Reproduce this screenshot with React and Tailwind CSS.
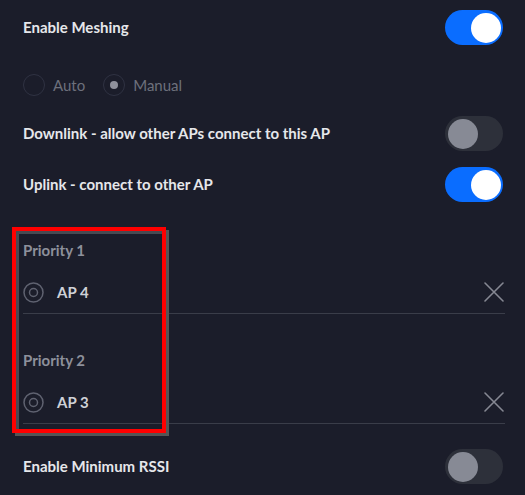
import { useState } from 'react';

function Toggle({ on, onChange }) {
  return (
    <button
      onClick={onChange}
      className={`relative w-[58px] h-[35px] rounded-full shrink-0 ${on ? 'bg-[#0a6dff]' : 'bg-[#2d303a]'}`}
    >
      <span
        className={`absolute top-[2.5px] w-[30px] h-[30px] rounded-full ${on ? 'left-[26px] bg-white' : 'left-[3px] bg-[#878a95]'}`}
      />
    </button>
  );
}

function Radio({ checked, label }) {
  return (
    <div className="flex items-center gap-[8px]">
      <span className="w-[22px] h-[22px] rounded-full border border-[#2f3242] flex items-center justify-center">
        {checked && <span className="w-[8px] h-[8px] rounded-full bg-[#8f919c]" />}
      </span>
      <span className="text-[15px] text-[#6d707c]">{label}</span>
    </div>
  );
}

function TargetIcon() {
  return (
    <svg width="21" height="21" viewBox="0 0 21 21" fill="none" stroke="#5f6270" strokeWidth="1.5">
      <circle cx="10.5" cy="10.5" r="9.5" />
      <circle cx="10.5" cy="10.5" r="4" />
    </svg>
  );
}

function CloseIcon() {
  return (
    <svg width="20" height="20" viewBox="0 0 20 20" fill="none" stroke="#868893" strokeWidth="1.6" strokeLinecap="round">
      <path d="M1 1L19 19M19 1L1 19" />
    </svg>
  );
}

function PriorityItem({ label, ap, mt }) {
  return (
    <div className={mt}>
      <div className="text-[15px] font-bold text-[#8d909b] leading-[20px]">{label}</div>
      <div className="mt-[21px] pb-[10px] border-b border-[#3a3d49] mr-[-2px]">
        <div className="h-[22px] flex items-center">
          <TargetIcon />
          <span className="ml-[13px] text-[15px] font-bold text-[#cfd1d7]">{ap}</span>
          <span className="ml-auto mr-[1px]">
            <CloseIcon />
          </span>
        </div>
      </div>
    </div>
  );
}

export default function App() {
  const [meshing, setMeshing] = useState(true);
  const [downlink, setDownlink] = useState(false);
  const [uplink, setUplink] = useState(true);
  const [rssi, setRssi] = useState(false);

  return (
    <div
      className="relative w-[525px] h-[495px] overflow-hidden bg-[#1b1d2a] pl-[23px] pr-[22px] pt-[10px]"
      style={{ fontFamily: 'Lato, "Noto Sans", sans-serif' }}
    >
      {/* Meshing */}
      <div className="h-[35px] flex items-center justify-between">
        <span className="text-[15px] font-bold text-[#e6e7ea]">Enable Meshing</span>
        <Toggle on={meshing} onChange={() => setMeshing(!meshing)} />
      </div>

      <div className="mt-[29px] h-[22px] flex items-center gap-[18px]">
        <Radio label="Auto" />
        <Radio label="Manual" checked />
      </div>

      <div className="mt-[20px] h-[35px] flex items-center justify-between">
        <span className="text-[15px] font-bold text-[#e6e7ea]">Downlink - allow other APs connect to this AP</span>
        <Toggle on={downlink} onChange={() => setDownlink(!downlink)} />
      </div>

      <div className="mt-[16px] h-[35px] flex items-center justify-between">
        <span className="text-[15px] font-bold text-[#e6e7ea]">Uplink - connect to other AP</span>
        <Toggle on={uplink} onChange={() => setUplink(!uplink)} />
      </div>

      <PriorityItem label="Priority 1" ap="AP 4" mt="mt-[38px]" />
      <PriorityItem label="Priority 2" ap="AP 3" mt="mt-[36px]" />

      <div className="mt-[25px] h-[35px] flex items-center justify-between">
        <span className="text-[15px] font-bold text-[#e6e7ea]">Enable Minimum RSSI</span>
        <Toggle on={rssi} onChange={() => setRssi(!rssi)} />
      </div>

      {/* annotation box */}
      <div className="absolute left-[12px] top-[227px] w-[154px] h-[206px] border-4 border-[#ff0000] shadow-[3px_3px_0_#555555,inset_3px_3px_0_#474a52] pointer-events-none" />
    </div>
  );
}
